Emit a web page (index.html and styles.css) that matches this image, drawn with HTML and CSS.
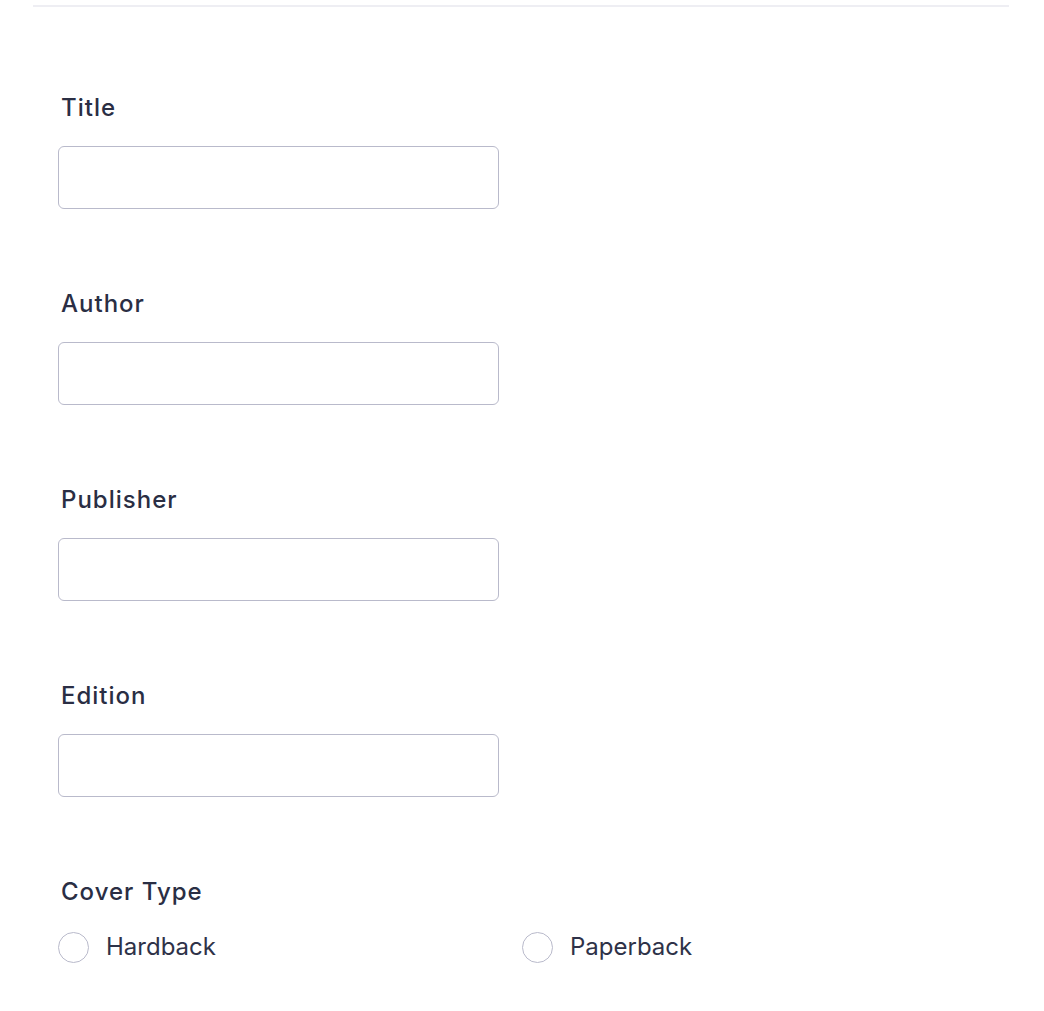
FILE: index.html
```html
<!DOCTYPE html>
<html lang="en">
<head>
  <meta charset="UTF-8">
  <meta name="viewport" content="width=device-width, initial-scale=1.0">
  <title>Book Details</title>
  <link rel="stylesheet" href="styles.css">
</head>
<body>
  <hr class="divider">

  <form class="book-form">
    <div class="field">
      <label for="title">Title</label>
      <input type="text" id="title" name="title">
    </div>

    <div class="field">
      <label for="author">Author</label>
      <input type="text" id="author" name="author">
    </div>

    <div class="field">
      <label for="publisher">Publisher</label>
      <input type="text" id="publisher" name="publisher">
    </div>

    <div class="field">
      <label for="edition">Edition</label>
      <input type="text" id="edition" name="edition">
    </div>

    <div class="field">
      <span class="field-label">Cover Type</span>
      <div class="radio-group">
        <label class="radio">
          <input type="radio" name="cover" value="hardback">
          Hardback
        </label>
        <label class="radio">
          <input type="radio" name="cover" value="paperback">
          Paperback
        </label>
      </div>
    </div>
  </form>
</body>
</html>
```

FILE: styles.css
```css
* { margin: 0; padding: 0; box-sizing: border-box; }
body, html { width: 100%; background: #fff; }
body {
  font-family: Inter, "Noto Sans", "Liberation Sans", sans-serif;
  color: #2a2e44;
}
.divider {
  border: none;
  border-top: 2px solid #eeeef3;
  margin: 5px 35px 0 33px;
}
.book-form {
  padding: 83px 58px 0 58px;
  display: flex;
  flex-direction: column;
  gap: 77px;
}
.field label,
.field .field-label {
  display: block;
  font-size: 24px;
  line-height: 36px;
  font-weight: 500;
  letter-spacing: 1px;
  padding-left: 3px;
}
.field input[type="text"] {
  display: block;
  width: 441px;
  height: 63px;
  margin-top: 20px;
  border: 1.5px solid #b9bacb;
  border-radius: 6px;
  background: #fff;
  font: inherit;
  padding: 0 16px;
}
.radio-group {
  display: grid;
  grid-template-columns: 464px 464px;
  margin-top: 19px;
}
.field .radio {
  display: flex;
  align-items: center;
  gap: 17px;
  padding-left: 0;
  font-weight: 400;
  letter-spacing: 0;
  color: #2e3248;
}
.radio input {
  appearance: none;
  width: 31px;
  height: 31px;
  border: 1.5px solid #b9bacb;
  border-radius: 50%;
  background: #fff;
}
```
